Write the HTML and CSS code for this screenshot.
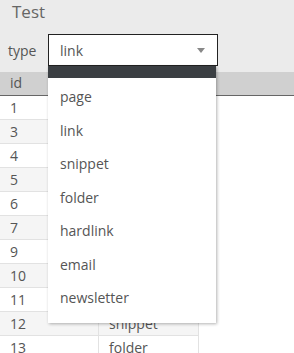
FILE: index.html
```html
<!DOCTYPE html>
<html>
<head>
  <title>Test</title>
  <link rel="stylesheet" href="styles.css">
</head>
<body>
  <div class="top">
    <h1>Test</h1>
    <div class="filter">
      <label for="typeSelect">type</label>
      <div class="select" id="typeSelect">
        <span>link</span>
        <span class="arrow"></span>
      </div>
    </div>
  </div>

  <!-- type cells under the open menu are left empty -->
  <div class="grid">
    <div class="row head">
      <div class="cell">id</div>
      <div class="cell"></div>
      <div class="cell rest"></div>
    </div>
    <div class="row"><div class="cell">1</div><div class="cell"></div><div class="cell rest"></div></div>
    <div class="row"><div class="cell">3</div><div class="cell"></div><div class="cell rest"></div></div>
    <div class="row"><div class="cell">4</div><div class="cell"></div><div class="cell rest"></div></div>
    <div class="row"><div class="cell">5</div><div class="cell"></div><div class="cell rest"></div></div>
    <div class="row"><div class="cell">6</div><div class="cell"></div><div class="cell rest"></div></div>
    <div class="row"><div class="cell">7</div><div class="cell"></div><div class="cell rest"></div></div>
    <div class="row"><div class="cell">9</div><div class="cell"></div><div class="cell rest"></div></div>
    <div class="row"><div class="cell">10</div><div class="cell"></div><div class="cell rest"></div></div>
    <div class="row"><div class="cell">11</div><div class="cell"></div><div class="cell rest"></div></div>
    <div class="row"><div class="cell">12</div><div class="cell">snippet</div><div class="cell rest"></div></div>
    <div class="row"><div class="cell">13</div><div class="cell">folder</div><div class="cell rest"></div></div>
  </div>

  <!-- open dropdown -->
  <div class="menu">
    <div class="menu-bar"></div>
    <ul>
      <li>page</li>
      <li>link</li>
      <li>snippet</li>
      <li>folder</li>
      <li>hardlink</li>
      <li>email</li>
      <li>newsletter</li>
    </ul>
  </div>
</body>
</html>
```

FILE: styles.css
```css
body {
  margin: 0;
  font-family: 'Open Sans', 'Noto Sans', sans-serif;
  font-size: 14px;
  color: #555;
  background: white;
  overflow: hidden;
}
.top {
  background: #ebebeb;
  height: 72px;
}
h1 {
  margin: 0;
  padding: 0 0 0 12px;
  font-size: 17px;
  font-weight: normal;
  line-height: 23px;
  color: #666;
}
.filter {
  display: flex;
  align-items: center;
  margin-top: 11px;
  padding-left: 8px;
}
.filter label {
  width: 40px;
}
.select {
  display: flex;
  align-items: center;
  justify-content: space-between;
  box-sizing: border-box;
  width: 170px;
  height: 32px;
  padding: 0 12px 0 11px;
  background: white;
  border: 1px solid #222;
}
.arrow {
  width: 0;
  height: 0;
  border-left: 4px solid transparent;
  border-right: 4px solid transparent;
  border-top: 5px solid #888;
}
.row {
  display: grid;
  grid-template-columns: 99px 100px 1fr;
  height: 24px;
}
.row:nth-child(odd) .cell {
  background: #f5f5f5;
}
.cell {
  box-sizing: border-box;
  padding-left: 10px;
  line-height: 23px;
  border-bottom: 1px solid #e2e2e2;
  border-right: 1px solid #e2e2e2;
}
.row .cell.rest {
  background: white;
  border: none;
}
.row.head {
  height: 23px;
  background: #d0d0d0;
  border-bottom: 1px solid #666;
}
.row.head .cell {
  background: #d0d0d0;
  border: none;
  line-height: 22px;
}
.menu {
  position: absolute;
  left: 48px;
  top: 66px;
  width: 168px;
  background: white;
  box-shadow: 1px 1px 3px rgba(0,0,0,0.3);
}
.menu-bar {
  height: 12px;
  background: #3b3f43;
}
.menu ul {
  list-style: none;
  margin: 0;
  padding: 2px 0 8px;
}
.menu li {
  padding: 8px 12px;
  line-height: 17.5px;
}
```
